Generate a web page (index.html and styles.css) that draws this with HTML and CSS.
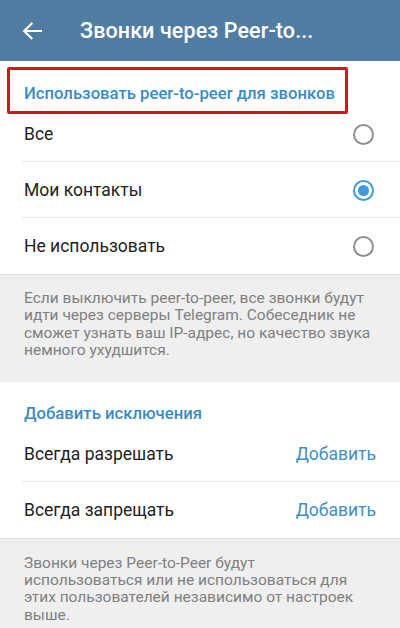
FILE: index.html
```html
<!DOCTYPE html>
<html lang="ru">
<head>
<meta charset="utf-8">
<link rel="stylesheet" href="styles.css">
</head>
<body>
<div class="app">
  <header class="topbar">
    <svg class="back" width="20" height="18" viewBox="0 0 20 18"><path d="M19 9H2.5M9.5 1.8L2.2 9l7.3 7.2" fill="none" stroke="#fff" stroke-width="2.2" stroke-linecap="square"/></svg>
    <div class="title">Звонки через Peer-to...</div>
  </header>

  <section class="card">
    <div class="sec-title first">
      <span>Использовать peer-to-peer для звонков</span>
      <div class="highlight"></div>
    </div>
    <div class="row divided"><span class="label">Все</span><span class="radio"></span></div>
    <div class="row divided"><span class="label">Мои контакты</span><span class="radio on"></span></div>
    <div class="row"><span class="label">Не использовать</span><span class="radio"></span></div>
  </section>

  <p class="info">Если выключить peer-to-peer, все звонки будут<br>идти через серверы Telegram. Собеседник не<br>сможет узнать ваш IP-адрес, но качество звука<br>немного ухудшится.</p>

  <section class="card">
    <div class="sec-title second"><span>Добавить исключения</span></div>
    <div class="row divided"><span class="label">Всегда разрешать</span><span class="action">Добавить</span></div>
    <div class="row"><span class="label">Всегда запрещать</span><span class="action">Добавить</span></div>
  </section>

  <p class="info footer">Звонки через Peer-to-Peer будут<br>использоваться или не использоваться для<br>этих пользователей независимо от настроек<br>выше.</p>
</div>
</body>
</html>
```

FILE: styles.css
```css
* { box-sizing: border-box; }
html, body { margin: 0; padding: 0; }
body {
  width: 400px;
  height: 628px;
  overflow: hidden;
  background: #efefef;
  font-family: Roboto, "Noto Sans", sans-serif;
}
.app { display: flex; flex-direction: column; }
.topbar {
  height: 61px;
  background: #527da3;
  display: flex;
  align-items: center;
  padding-left: 22px;
}
.back { flex: none; margin-top: 1px; }
.title {
  margin-left: 38px;
  color: #fff;
  font-size: 21.5px;
  font-weight: 500;
  letter-spacing: 0.1px;
}
.card { background: #fff; display: flex; flex-direction: column; }
.sec-title {
  position: relative;
  color: #3a8cc2;
  font-size: 16.7px;
  font-weight: 500;
  padding-left: 24px;
  display: flex;
  align-items: flex-end;
}
.sec-title.first { height: 45px; padding-bottom: 3px; }
.sec-title.second { height: 44px; padding-bottom: 3px; }
.highlight {
  position: absolute;
  left: 7px;
  top: 6px;
  width: 341px;
  height: 47px;
  border: 3px solid #d7121c;
  border-radius: 2px;
  pointer-events: none;
}
.row {
  height: 56px;
  display: flex;
  align-items: center;
  justify-content: space-between;
  padding: 0 24px;
  position: relative;
}
.row.divided::after {
  content: "";
  position: absolute;
  left: 22px;
  right: 0;
  bottom: 0;
  height: 1px;
  background: #e8e8e8;
}
.label { color: #222; font-size: 17.5px; }
.radio {
  width: 21px;
  height: 21px;
  border: 2px solid #8f8f8f;
  border-radius: 50%;
  margin-right: 2px;
  display: flex;
  align-items: center;
  justify-content: center;
}
.radio.on { border-color: #3d9ae0; }
.radio.on::after {
  content: "";
  width: 11px;
  height: 11px;
  border-radius: 50%;
  background: #3d9ae0;
}
.action { color: #3d8fc6; font-size: 17.5px; }
.info {
  margin: 0;
  color: #808080;
  font-size: 15.5px;
  line-height: 17.4px;
  padding: 15px 8px 22px 24px;
  border-top: 1px solid #e4e4e4;
  white-space: nowrap;
}
.footer { padding-top: 16px; }
```
